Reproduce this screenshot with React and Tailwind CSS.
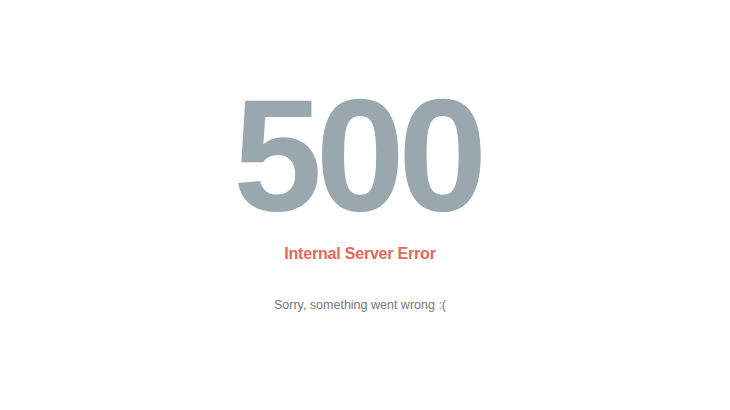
import React from "react";

export default function App() {
  return (
    <div
      className="min-h-screen w-full bg-white flex flex-col items-center text-center pr-[10px]"
      style={{ fontFamily: '"Liberation Sans", Arial, sans-serif' }}
    >
      <h1 className="mt-[67px] text-[160px] leading-[176px] font-bold text-[#99a7af] tracking-[-6.5px] mr-[6px]">
        500
      </h1>
      <h2 className="mt-[1px] text-[16px] leading-[20px] font-bold text-[#e5675c] tracking-[-0.2px]">
        Internal Server Error
      </h2>
      <p className="mt-[33px] text-[12.5px] leading-[16px] text-[#777777]">
        Sorry, something went wrong :(
      </p>
    </div>
  );
}
